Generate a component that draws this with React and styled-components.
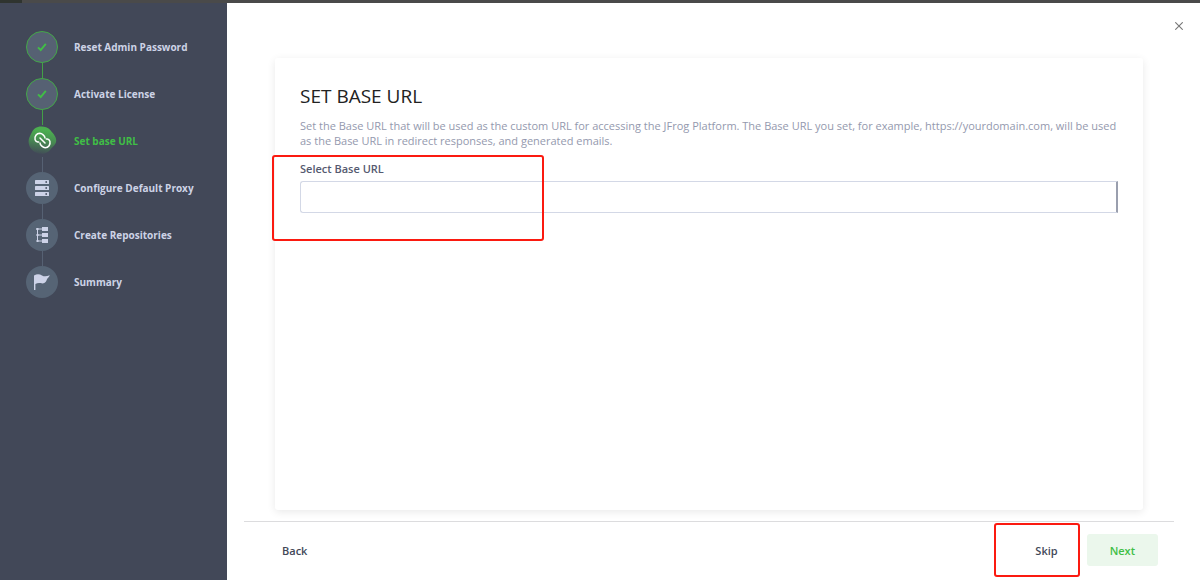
import React from 'react'
import styled, { createGlobalStyle, css } from 'styled-components'

const GlobalStyle = createGlobalStyle`
    * {
        box-sizing: border-box;
    }

    body {
        margin: 0;
        background-color: #fff;
        font-family: 'Open Sans', 'Noto Sans', sans-serif;
    }

    button, input {
        font-family: inherit;
    }
`

const Page = styled.div`
    display: flex;
    flex-direction: column;
    min-height: 100vh;
`

const TopBar = styled.div`
    height: 3px;
    background: linear-gradient(to right, #2f342f 22px, #4a4a4a 22px);
`

const Content = styled.div`
    flex: 1;
    display: flex;
`

const Sidebar = styled.nav`
    flex: 0 0 227px;
    padding: 28px 26px;
    background-color: #424858;
`

const StepList = styled.ol`
    margin: 0;
    padding: 0;
    list-style: none;
    display: flex;
    flex-direction: column;
`

const Step = styled.li`
    display: flex;
    flex-direction: column;
`

const StepRow = styled.div`
    display: flex;
    align-items: center;
    gap: 16px;
    height: 32px;
    color: ${({ $active }) => ($active ? '#40be46' : '#cdd3e6')};
    font-size: 10px;
    font-weight: 700;
    white-space: nowrap;
`

const Connector = styled.div`
    width: 1px;
    height: 15px;
    margin-left: 16px;
    background-color: ${({ $done }) => ($done ? '#43a047' : '#566173')};
`

const Bubble = styled.span`
    display: flex;
    align-items: center;
    justify-content: center;
    width: 32px;
    height: 32px;
    border-radius: 50%;

    ${({ $state }) => $state === 'done' && css`
        background-color: #566173;
        border: 1px solid #43a848;
    `}

    ${({ $state }) => $state === 'todo' && css`
        background-color: #566475;
    `}
`

const Main = styled.main`
    flex: 1;
    min-width: 0;
    display: flex;
    flex-direction: column;
`

const CloseRow = styled.div`
    display: flex;
    justify-content: flex-end;
    height: 55px;
    padding: 14px 12px;
`

const CloseButton = styled.button`
    display: flex;
    align-items: center;
    justify-content: center;
    width: 18px;
    height: 18px;
    padding: 0;
    border: none;
    background: none;
    cursor: pointer;
`

const Card = styled.section`
    flex: 1;
    margin: 0 57px 11px 48px;
    padding: 24px 25px;
    border-radius: 3px;
    box-shadow: 0 2px 8px rgba(0, 0, 0, 0.09);
`

const Title = styled.h1`
    margin: 0;
    color: #222;
    font-size: 19px;
    line-height: 28px;
    font-weight: 400;
`

const Description = styled.p`
    margin: 8px 0 0;
    color: #9499ae;
    font-size: 11px;
    line-height: 15px;
`

const Field = styled.div`
    position: relative;
    display: flex;
    flex-direction: column;
    gap: 4px;
    margin-top: 13px;
`

const Label = styled.label`
    color: #555a70;
    font-size: 11px;
    line-height: 16px;
    font-weight: 600;
`

const TextInput = styled.input`
    width: 100%;
    height: 32px;
    padding: 0 10px;
    border: 1px solid #d3d8e6;
    border-right: 2px solid #9a9fae;
    border-radius: 3px 0 0 3px;
    background-color: #fff;
    font-size: 11px;
    outline: none;
`

const Marker = styled.span`
    position: absolute;
    border: 2px solid #fb1a10;
    border-radius: 3px;
    pointer-events: none;
`

const FieldMarker = styled(Marker)`
    top: -6px;
    left: -28px;
    width: 272px;
    height: 86px;
`

const SkipMarker = styled(Marker)`
    top: -11px;
    right: -14px;
    width: 86px;
    height: 54px;
`

const Footer = styled.footer`
    display: flex;
    align-items: center;
    justify-content: space-between;
    margin: 0 26px 0 17px;
    padding: 12px 16px 14px 30px;
    border-top: 1px solid #dcdcde;
`

const Actions = styled.div`
    display: flex;
    align-items: center;
    gap: 21px;
`

const SkipWrapper = styled.div`
    position: relative;
    display: flex;
`

const Button = styled.button`
    height: 32px;
    padding: 0 ${({ $primary }) => ($primary ? '23px' : '8px')};
    border: none;
    border-radius: 3px;
    background-color: ${({ $primary }) => ($primary ? '#ebf7ec' : 'transparent')};
    color: ${({ $primary }) => ($primary ? '#40be46' : '#424858')};
    font-size: 11px;
    font-weight: 600;
    cursor: pointer;
`

const CheckIcon = () => (
    <svg width="10" height="10" viewBox="0 0 10 10" fill="none" aria-hidden="true">
        <path d="M1 5.400 3.700 8 8.800 1.800" stroke="#40be46" strokeWidth="1.900" />
    </svg>
)

const LinkIcon = () => (
    <svg width="32" height="32" viewBox="0 0 32 32" fill="none" aria-hidden="true">
        <defs>
            <linearGradient id="blob" x1="18" y1="2" x2="14" y2="30" gradientUnits="userSpaceOnUse">
                <stop offset="0.1" stopColor="#4caf50" />
                <stop offset="0.5" stopColor="#478a52" />
                <stop offset="1" stopColor="#424858" />
            </linearGradient>
        </defs>
        <path
            d="M12 2C16 .8 21 1.800 24 4.800C26 7.400 30 11 30.200 15C30.400 19.400 27 21.400 24.500 24.400C21 28.400 16 30 11 28C6 26.400 2.600 21.400 2.600 16.400C2.600 13.400 4 11 5.500 8C7 4.400 9 3 12 2Z"
            fill="url(#blob)"
        />
        <g stroke="#fff" strokeWidth="1.5" strokeLinecap="round">
            <path d="M12.600 16.900C11 17.300 9.600 16.200 9.100 14.800C8.300 11.400 10.500 8.300 13.800 8.300C15.900 8.400 18.900 10.700 19 13" />
            <path d="M14 13 19 18" />
            <path d="M20.400 14.100C22 13.700 23.400 14.800 23.900 16.200C24.700 19.600 22.500 22.700 19.200 22.700C17.100 22.600 14.100 20.300 14 18" />
        </g>
    </svg>
)

const ServerIcon = () => (
    <svg width="14" height="16" viewBox="0 0 14 16" aria-hidden="true">
        {[0, 6, 12].map((y) => (
            <g key={y}>
                <rect y={y} width="14" height="4" rx="0.6" fill="#cdd3e8" />
                <circle cx="11.200" cy={y + 2} r="0.9" fill="#4c5568" />
            </g>
        ))}
    </svg>
)

const TreeIcon = () => (
    <svg width="12" height="16" viewBox="0 0 12 16" aria-hidden="true">
        <path d="M1.500 1.500V14.500M0 2H7M1.500 8H7M1.500 14H7" stroke="#cdd3e8" fill="none" />
        {[0, 6, 12].map((y) => (
            <g key={y} fill="#cdd3e8">
                <rect x="6" y={y} width="6" height="4" />
                <rect x="0.500" y={y + 1} width="2" height="2" />
            </g>
        ))}
    </svg>
)

const FlagIcon = () => (
    <svg width="16" height="16" viewBox="0 0 16 16" fill="#cdd3e8" aria-hidden="true">
        <path d="M0 1.400C3-.3 5.500-.1 8 1.400C10.300 2.700 12.500 2.400 15.800 1.200C15 3 13.800 3.900 13 5.300C12.200 7.300 11.500 9.400 8.500 9.400C6 9 3.500 8.600 1.400 10V16H0Z" />
    </svg>
)

const CloseIcon = () => (
    <svg width="8" height="8" viewBox="0 0 8 8" aria-hidden="true">
        <path d="M0.300 0.300 7.700 7.700M7.700 0.300 0.300 7.700" stroke="#777" strokeWidth="1.100" />
    </svg>
)

const steps = [
    { label: 'Reset Admin Password', state: 'done', Icon: CheckIcon },
    { label: 'Activate License', state: 'done', Icon: CheckIcon },
    { label: 'Set base URL', state: 'active', Icon: LinkIcon },
    { label: 'Configure Default Proxy', state: 'todo', Icon: ServerIcon },
    { label: 'Create Repositories', state: 'todo', Icon: TreeIcon },
    { label: 'Summary', state: 'todo', Icon: FlagIcon },
]

const App = () => {
    return (
        <>
            <GlobalStyle />
            <Page>
                <TopBar />
                <Content>
                    <Sidebar>
                        <StepList>
                            {steps.map(({ label, state, Icon }, index) => (
                                <Step key={label} aria-current={state === 'active' ? 'step' : undefined}>
                                    <StepRow $active={state === 'active'}>
                                        <Bubble $state={state}><Icon /></Bubble>
                                        {label}
                                    </StepRow>
                                    {index < steps.length - 1 && <Connector $done={state === 'done'} />}
                                </Step>
                            ))}
                        </StepList>
                    </Sidebar>
                    <Main>
                        <CloseRow>
                            <CloseButton type="button" aria-label="Close"><CloseIcon /></CloseButton>
                        </CloseRow>
                        <Card>
                            <Title>SET BASE URL</Title>
                            <Description>
                                Set the Base URL that will be used as the custom URL for accessing the JFrog Platform.
                                The Base URL you set, for example, https://yourdomain.com, will be used as the Base URL
                                in redirect responses, and generated emails.
                            </Description>
                            <Field>
                                <Label htmlFor="base-url">Select Base URL</Label>
                                <TextInput id="base-url" type="text" />
                                <FieldMarker />
                            </Field>
                        </Card>
                        <Footer>
                            <Button type="button">Back</Button>
                            <Actions>
                                <SkipWrapper>
                                    <Button type="button">Skip</Button>
                                    <SkipMarker />
                                </SkipWrapper>
                                <Button type="button" $primary>Next</Button>
                            </Actions>
                        </Footer>
                    </Main>
                </Content>
            </Page>
        </>
    )
}

export default App
